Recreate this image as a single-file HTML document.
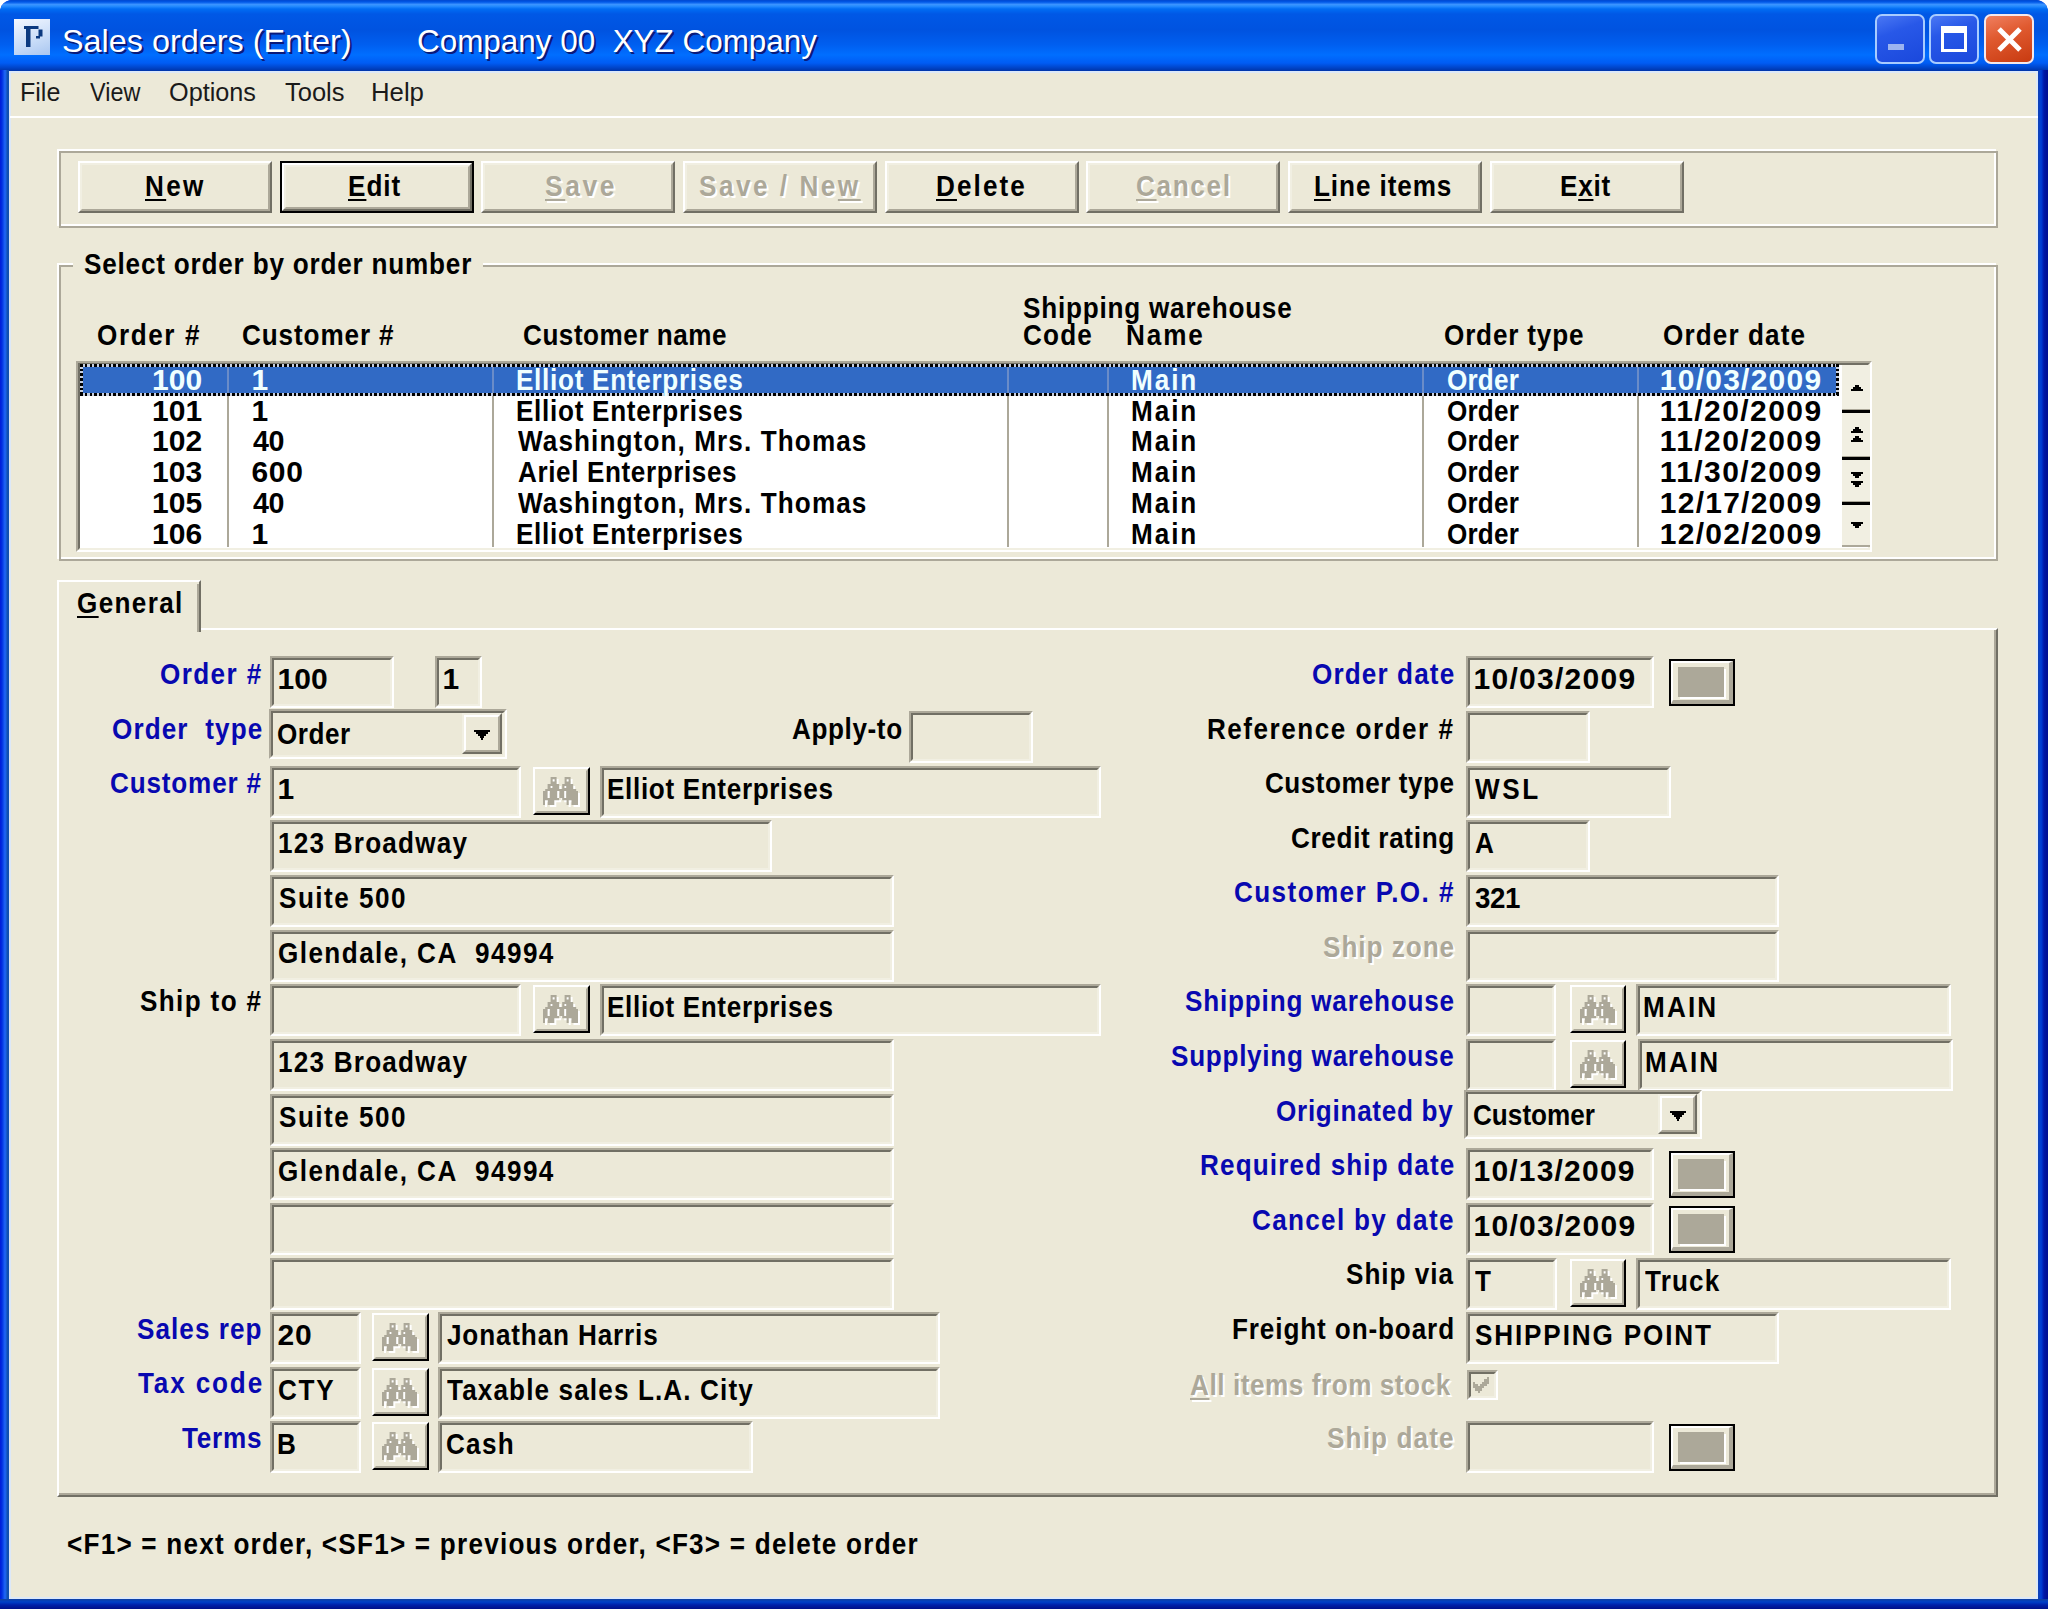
<!DOCTYPE html><html><head><meta charset="utf-8"><style>
*{margin:0;padding:0}
html,body{width:2048px;height:1609px;overflow:hidden;background:#fff;position:relative}
body>div,body>svg{position:absolute}
.t{position:absolute;white-space:nowrap;font-family:"Liberation Sans",sans-serif}
.t u{text-decoration:underline;text-decoration-thickness:2px;text-underline-offset:3px}
.title{left:0;top:0;width:2048px;height:71px;border-radius:12px 12px 0 0;
 background:linear-gradient(180deg,#0048d0 0,#0058e8 2px,#3a93ff 4.5px,#288eff 6px,#006cf4 9px,#0058e6 14px,#0053e0 30px,#005ff0 45px,#006eff 55px,#005cf4 63px,#0048d0 67px,#0034a8 71px);}
.tb{width:50px;height:50px;box-sizing:border-box;border:2.5px solid #a8ccff;border-radius:7px;
 background:linear-gradient(160deg,#4a78f4 0,#2858e8 35%,#1a48dc 100%);}
.tb.close{border-color:#f4e8ec;background:linear-gradient(160deg,#f08060 0,#e05a30 40%,#c83a10 100%);}
.sunk{position:absolute;border-style:solid;border-width:2px;border-color:#aca899 #fff #fff #aca899;}
.sunk::before{content:"";position:absolute;left:0;top:0;right:0;bottom:0;border-style:solid;border-width:2px;border-color:#716f64 #f1efe2 #f1efe2 #716f64;}
.btn,.btn2{position:absolute;background:#ece9d8;border-style:solid;border-width:2px;border-color:#fff #716f64 #716f64 #fff;}
.btn::before,.btn2::before{content:"";position:absolute;left:0;top:0;right:0;bottom:0;border-style:solid;border-width:2px;border-color:#f1efe2 #aca899 #aca899 #f1efe2;}
.btn2{border-color:#f1efe2 #716f64 #716f64 #f1efe2}
.btn2::before{border-color:#fff #aca899 #aca899 #fff}
.btn.blk{border-color:#fff #000 #000 #fff}
.btn.blk::before{border-color:#ece9d8 #aca899 #aca899 #ece9d8}
.etch1{position:absolute;border:2px solid #aca899}
.etch2{position:absolute;border:2px solid #fff}
.panel{position:absolute;border-style:solid;border-width:2px;border-color:#fff #716f64 #716f64 #fff;}
.panel::before{content:"";position:absolute;left:0;top:0;right:0;bottom:0;border-style:solid;border-width:0 2px 2px 0;border-color:#aca899;}
.tab{position:absolute;background:#ece9d8;border-style:solid;border-width:2px 2px 0 2px;border-color:#fff #716f64 #fff #fff;}
.tab::after{content:"";position:absolute;right:0;top:2px;bottom:0;width:2px;background:#aca899}
.cal{position:absolute;border:2px solid #000;background:#ece9d8}
.calin{position:absolute;left:0;top:0;right:0;bottom:0;border-style:solid;border-width:2px 4px 4px 2px;border-color:#fff #aca899 #aca899 #fff;}
.calface{position:absolute;left:7px;top:6px;right:9px;bottom:7px;background:#aca899;box-shadow:2px 2px 0 #fff}
.chk{position:absolute;border-style:solid;border-width:2px;border-color:#aca899 #fff #fff #aca899;background:#ece9d8}
.chk::before{content:"";position:absolute;left:0;top:0;right:0;bottom:0;border-style:solid;border-width:2px;border-color:#716f64 #f1efe2 #f1efe2 #716f64;}
</style></head><body>
<div style="left:0;top:0;width:2048px;height:1609px;background:#0831d9;border-radius:12px 12px 0 0;"></div>
<div class="title"></div>
<div style="left:0px;top:70px;width:9px;height:1539px;background:linear-gradient(90deg,#001ad8 0,#0030e0 2px,#2068f8 5px,#1050b0 7.5px,#1050b0 9px);"></div>
<div style="left:2038px;top:70px;width:10px;height:1539px;background:linear-gradient(90deg,#1040b0 0,#0040d8 3px,#0018a8 6px,#000e90 10px);"></div>
<div style="left:0px;top:1599px;width:2048px;height:10px;background:linear-gradient(180deg,#1040a0 0,#0040c8 3px,#0020a8 6px,#001088 10px);"></div>
<div style="left:9px;top:71px;width:2029px;height:1528px;background:#ece9d8;box-sizing:border-box;border:2px solid #dce8f8;"></div>
<div style="left:14px;top:19px;width:36px;height:36px;background:linear-gradient(160deg,#f4f8ff,#c8dcf8 60%,#a9c6f0);"></div>
<svg style="left:14px;top:19px" width="36" height="36" viewBox="14 19 36 36"><g fill="#0c3a80"><rect x="26" y="26" width="4.5" height="21"/><rect x="24" y="26" width="14.5" height="3"/><rect x="38.5" y="29.5" width="4" height="7"/><rect x="36" y="36" width="4" height="2.5"/></g></svg>
<div class="t" style="left:62.0px;top:24.9px;font-size:32px;line-height:32px;height:32px;color:#fff;font-weight:normal;transform-origin:0 0;transform:scaleX(1.0117);text-shadow:2px 2px 0 #0a1a7a;">Sales orders (Enter)</div>
<div class="t" style="left:417.0px;top:24.9px;font-size:32px;line-height:32px;height:32px;color:#fff;font-weight:normal;transform-origin:0 0;transform:scaleX(0.9820);text-shadow:2px 2px 0 #0a1a7a;">Company 00&nbsp; XYZ Company</div>
<div class="tb" style="left:1875px;top:14px;"><div style="position:absolute;left:11px;top:28px;width:16px;height:6px;background:#9cb4f0"></div></div>
<div class="tb" style="left:1929px;top:14px;"><div style="position:absolute;left:10px;top:10px;width:26px;height:26px;border:3px solid #fff;border-top-width:7px;box-sizing:border-box;"></div></div>
<div class="tb close" style="left:1984px;top:14px;"><svg style="position:absolute;left:9px;top:9px" width="29" height="29" viewBox="0 0 29 29"><path d="M4 4L25 25M25 4L4 25" stroke="#fff" stroke-width="5"/></svg></div>
<div class="t" style="left:20.1px;top:79.2px;font-size:26px;line-height:26px;height:26px;color:#1a1a1a;font-weight:normal;transform-origin:0 0;transform:scaleX(0.9636);">File</div>
<div class="t" style="left:89.5px;top:79.2px;font-size:26px;line-height:26px;height:26px;color:#1a1a1a;font-weight:normal;transform-origin:0 0;transform:scaleX(0.9000);">View</div>
<div class="t" style="left:169.0px;top:79.2px;font-size:26px;line-height:26px;height:26px;color:#1a1a1a;font-weight:normal;transform-origin:0 0;transform:scaleX(0.9706);">Options</div>
<div class="t" style="left:285.0px;top:79.2px;font-size:26px;line-height:26px;height:26px;color:#1a1a1a;font-weight:normal;transform-origin:0 0;transform:scaleX(0.9803);">Tools</div>
<div class="t" style="left:370.5px;top:79.2px;font-size:26px;line-height:26px;height:26px;color:#1a1a1a;font-weight:normal;transform-origin:0 0;transform:scaleX(0.9899);">Help</div>
<div style="left:10px;top:116px;width:2028px;height:2px;background:#fff;"></div>
<div class="etch2" style="left:57px;top:149px;width:1935px;height:73px"></div>
<div class="etch1" style="left:59px;top:151px;width:1935px;height:73px"></div>
<div class="btn" style="left:78px;top:161px;width:190px;height:48px"></div>
<div class="t" style="left:145.0px;top:170.6px;font-size:30px;line-height:30px;height:30px;color:#000;font-weight:bold;transform-origin:0 0;transform:scaleX(0.8700);letter-spacing:2.64px;"><u>N</u>ew</div>
<div style="left:280px;top:161px;width:194px;height:52px;background:#000"></div>
<div class="btn" style="left:282px;top:163px;width:186px;height:44px"></div>
<div class="t" style="left:348.3px;top:170.6px;font-size:30px;line-height:30px;height:30px;color:#000;font-weight:bold;transform-origin:0 0;transform:scaleX(0.8700);letter-spacing:1.13px;"><u>E</u>dit</div>
<div class="btn" style="left:481px;top:161px;width:190px;height:48px"></div>
<div class="t" style="left:546.7px;top:172.6px;font-size:30px;line-height:30px;height:30px;color:#fff;font-weight:bold;transform-origin:0 0;transform:scaleX(0.8791);letter-spacing:3.00px;"><u>S</u>ave</div>
<div class="t" style="left:544.7px;top:170.6px;font-size:30px;line-height:30px;height:30px;color:#aca899;font-weight:bold;transform-origin:0 0;transform:scaleX(0.8791);letter-spacing:3.00px;"><u>S</u>ave</div>
<div class="btn" style="left:683px;top:161px;width:190px;height:48px"></div>
<div class="t" style="left:700.5px;top:172.6px;font-size:30px;line-height:30px;height:30px;color:#fff;font-weight:bold;transform-origin:0 0;transform:scaleX(0.8700);letter-spacing:2.91px;">Save / Ne<u>w</u></div>
<div class="t" style="left:698.5px;top:170.6px;font-size:30px;line-height:30px;height:30px;color:#aca899;font-weight:bold;transform-origin:0 0;transform:scaleX(0.8700);letter-spacing:2.91px;">Save / Ne<u>w</u></div>
<div class="btn" style="left:885px;top:161px;width:190px;height:48px"></div>
<div class="t" style="left:935.6px;top:170.6px;font-size:30px;line-height:30px;height:30px;color:#000;font-weight:bold;transform-origin:0 0;transform:scaleX(0.8700);letter-spacing:2.41px;"><u>D</u>elete</div>
<div class="btn" style="left:1086px;top:161px;width:190px;height:48px"></div>
<div class="t" style="left:1138.1px;top:172.6px;font-size:30px;line-height:30px;height:30px;color:#fff;font-weight:bold;transform-origin:0 0;transform:scaleX(0.8700);letter-spacing:1.94px;"><u>C</u>ancel</div>
<div class="t" style="left:1136.1px;top:170.6px;font-size:30px;line-height:30px;height:30px;color:#aca899;font-weight:bold;transform-origin:0 0;transform:scaleX(0.8700);letter-spacing:1.94px;"><u>C</u>ancel</div>
<div class="btn" style="left:1288px;top:161px;width:190px;height:48px"></div>
<div class="t" style="left:1314.3px;top:170.6px;font-size:30px;line-height:30px;height:30px;color:#000;font-weight:bold;transform-origin:0 0;transform:scaleX(0.8700);letter-spacing:1.05px;"><u>L</u>ine items</div>
<div class="btn" style="left:1490px;top:161px;width:190px;height:48px"></div>
<div class="t" style="left:1559.7px;top:170.6px;font-size:30px;line-height:30px;height:30px;color:#000;font-weight:bold;transform-origin:0 0;transform:scaleX(0.8700);letter-spacing:0.87px;">E<u>x</u>it</div>
<div class="etch2" style="left:57px;top:263px;width:1935px;height:292px"></div>
<div class="etch1" style="left:59px;top:265px;width:1935px;height:292px"></div>
<div style="left:73px;top:256px;width:410px;height:14px;background:#ece9d8;"></div>
<div class="t" style="left:84.4px;top:249.1px;font-size:30px;line-height:30px;height:30px;color:#000;font-weight:bold;transform-origin:0 0;transform:scaleX(0.8700);letter-spacing:0.93px;">Select order by order number</div>
<div class="t" style="left:1023.4px;top:292.6px;font-size:30px;line-height:30px;height:30px;color:#000;font-weight:bold;transform-origin:0 0;transform:scaleX(0.8700);letter-spacing:0.91px;">Shipping warehouse</div>
<div class="t" style="left:97.2px;top:320.1px;font-size:30px;line-height:30px;height:30px;color:#000;font-weight:bold;transform-origin:0 0;transform:scaleX(0.8700);letter-spacing:1.85px;">Order #</div>
<div class="t" style="left:242.1px;top:320.1px;font-size:30px;line-height:30px;height:30px;color:#000;font-weight:bold;transform-origin:0 0;transform:scaleX(0.8700);letter-spacing:1.02px;">Customer #</div>
<div class="t" style="left:522.5px;top:320.1px;font-size:30px;line-height:30px;height:30px;color:#000;font-weight:bold;transform-origin:0 0;transform:scaleX(0.8700);letter-spacing:0.61px;">Customer name</div>
<div class="t" style="left:1022.5px;top:320.1px;font-size:30px;line-height:30px;height:30px;color:#000;font-weight:bold;transform-origin:0 0;transform:scaleX(0.8700);letter-spacing:1.39px;">Code</div>
<div class="t" style="left:1125.8px;top:320.1px;font-size:30px;line-height:30px;height:30px;color:#000;font-weight:bold;transform-origin:0 0;transform:scaleX(0.8700);letter-spacing:2.20px;">Name</div>
<div class="t" style="left:1444.1px;top:320.1px;font-size:30px;line-height:30px;height:30px;color:#000;font-weight:bold;transform-origin:0 0;transform:scaleX(0.8700);letter-spacing:0.95px;">Order type</div>
<div class="t" style="left:1662.8px;top:320.1px;font-size:30px;line-height:30px;height:30px;color:#000;font-weight:bold;transform-origin:0 0;transform:scaleX(0.8700);letter-spacing:1.29px;">Order date</div>
<div class="sunk" style="left:76px;top:361px;width:1792px;height:187px;background:#fff"></div>
<div style="left:80px;top:364px;width:1759px;height:32px;background:#c8d0e0;"></div>
<div style="left:83px;top:367px;width:1753px;height:26px;background:#316ac5;"></div>
<div style="left:80px;top:364px;width:1759px;height:3px;background:repeating-linear-gradient(90deg,#000 0 2.7px,transparent 2.7px 4.75px);"></div>
<div style="left:80px;top:393px;width:1759px;height:3px;background:repeating-linear-gradient(90deg,#000 0 2.7px,transparent 2.7px 4.75px);"></div>
<div style="left:80px;top:364px;width:3px;height:32px;background:repeating-linear-gradient(180deg,#000 0 2.7px,transparent 2.7px 4.75px);"></div>
<div style="left:1836px;top:364px;width:3px;height:32px;background:repeating-linear-gradient(180deg,#000 0 2.7px,transparent 2.7px 4.75px);"></div>
<div style="left:227px;top:396px;width:2px;height:151px;background:#aca899;"></div>
<div style="left:227px;top:367px;width:2px;height:26px;background:#6a8cc8;"></div>
<div style="left:492px;top:396px;width:2px;height:151px;background:#aca899;"></div>
<div style="left:492px;top:367px;width:2px;height:26px;background:#6a8cc8;"></div>
<div style="left:1007px;top:396px;width:2px;height:151px;background:#aca899;"></div>
<div style="left:1007px;top:367px;width:2px;height:26px;background:#6a8cc8;"></div>
<div style="left:1107px;top:396px;width:2px;height:151px;background:#aca899;"></div>
<div style="left:1107px;top:367px;width:2px;height:26px;background:#6a8cc8;"></div>
<div style="left:1422px;top:396px;width:2px;height:151px;background:#aca899;"></div>
<div style="left:1422px;top:367px;width:2px;height:26px;background:#6a8cc8;"></div>
<div style="left:1637px;top:396px;width:2px;height:151px;background:#aca899;"></div>
<div style="left:1637px;top:367px;width:2px;height:26px;background:#6a8cc8;"></div>
<div class="t" style="left:152.0px;top:364.9px;font-size:30px;line-height:30px;height:30px;color:#f0ffff;font-weight:bold;transform-origin:0 0;transform:scaleX(1.0000);letter-spacing:0.12px;">100</div>
<div class="t" style="left:251.5px;top:364.9px;font-size:30px;line-height:30px;height:30px;color:#f0ffff;font-weight:bold;transform-origin:0 0;transform:scaleX(1.0000);letter-spacing:1.10px;">1</div>
<div class="t" style="left:516.3px;top:364.9px;font-size:30px;line-height:30px;height:30px;color:#f0ffff;font-weight:bold;transform-origin:0 0;transform:scaleX(0.8700);letter-spacing:0.82px;">Elliot Enterprises</div>
<div class="t" style="left:1130.7px;top:364.9px;font-size:30px;line-height:30px;height:30px;color:#f0ffff;font-weight:bold;transform-origin:0 0;transform:scaleX(0.8700);letter-spacing:2.24px;">Main</div>
<div class="t" style="left:1446.8px;top:364.9px;font-size:30px;line-height:30px;height:30px;color:#f0ffff;font-weight:bold;transform-origin:0 0;transform:scaleX(0.8700);letter-spacing:0.23px;">Order</div>
<div class="t" style="left:1659.8px;top:364.9px;font-size:30px;line-height:30px;height:30px;color:#f0ffff;font-weight:bold;transform-origin:0 0;transform:scaleX(1.0000);letter-spacing:1.24px;">10/03/2009</div>
<div class="t" style="left:152.0px;top:395.7px;font-size:30px;line-height:30px;height:30px;color:#000;font-weight:bold;transform-origin:0 0;transform:scaleX(1.0000);letter-spacing:0.12px;">101</div>
<div class="t" style="left:251.5px;top:395.7px;font-size:30px;line-height:30px;height:30px;color:#000;font-weight:bold;transform-origin:0 0;transform:scaleX(1.0000);letter-spacing:1.10px;">1</div>
<div class="t" style="left:516.3px;top:395.7px;font-size:30px;line-height:30px;height:30px;color:#000;font-weight:bold;transform-origin:0 0;transform:scaleX(0.8700);letter-spacing:0.82px;">Elliot Enterprises</div>
<div class="t" style="left:1130.7px;top:395.7px;font-size:30px;line-height:30px;height:30px;color:#000;font-weight:bold;transform-origin:0 0;transform:scaleX(0.8700);letter-spacing:2.24px;">Main</div>
<div class="t" style="left:1446.8px;top:395.7px;font-size:30px;line-height:30px;height:30px;color:#000;font-weight:bold;transform-origin:0 0;transform:scaleX(0.8700);letter-spacing:0.23px;">Order</div>
<div class="t" style="left:1659.8px;top:395.7px;font-size:30px;line-height:30px;height:30px;color:#000;font-weight:bold;transform-origin:0 0;transform:scaleX(1.0000);letter-spacing:1.42px;">11/20/2009</div>
<div class="t" style="left:152.0px;top:426.4px;font-size:30px;line-height:30px;height:30px;color:#000;font-weight:bold;transform-origin:0 0;transform:scaleX(1.0000);letter-spacing:0.12px;">102</div>
<div class="t" style="left:252.5px;top:426.4px;font-size:30px;line-height:30px;height:30px;color:#000;font-weight:bold;transform-origin:0 0;transform:scaleX(0.9539);letter-spacing:-0.50px;">40</div>
<div class="t" style="left:518.0px;top:426.4px;font-size:30px;line-height:30px;height:30px;color:#000;font-weight:bold;transform-origin:0 0;transform:scaleX(0.8700);letter-spacing:1.28px;">Washington, Mrs. Thomas</div>
<div class="t" style="left:1130.7px;top:426.4px;font-size:30px;line-height:30px;height:30px;color:#000;font-weight:bold;transform-origin:0 0;transform:scaleX(0.8700);letter-spacing:2.24px;">Main</div>
<div class="t" style="left:1446.8px;top:426.4px;font-size:30px;line-height:30px;height:30px;color:#000;font-weight:bold;transform-origin:0 0;transform:scaleX(0.8700);letter-spacing:0.23px;">Order</div>
<div class="t" style="left:1659.8px;top:426.4px;font-size:30px;line-height:30px;height:30px;color:#000;font-weight:bold;transform-origin:0 0;transform:scaleX(1.0000);letter-spacing:1.42px;">11/20/2009</div>
<div class="t" style="left:152.0px;top:457.2px;font-size:30px;line-height:30px;height:30px;color:#000;font-weight:bold;transform-origin:0 0;transform:scaleX(1.0000);letter-spacing:0.12px;">103</div>
<div class="t" style="left:251.5px;top:457.2px;font-size:30px;line-height:30px;height:30px;color:#000;font-weight:bold;transform-origin:0 0;transform:scaleX(1.0000);letter-spacing:0.67px;">600</div>
<div class="t" style="left:518.0px;top:457.2px;font-size:30px;line-height:30px;height:30px;color:#000;font-weight:bold;transform-origin:0 0;transform:scaleX(0.8700);letter-spacing:0.70px;">Ariel Enterprises</div>
<div class="t" style="left:1130.7px;top:457.2px;font-size:30px;line-height:30px;height:30px;color:#000;font-weight:bold;transform-origin:0 0;transform:scaleX(0.8700);letter-spacing:2.24px;">Main</div>
<div class="t" style="left:1446.8px;top:457.2px;font-size:30px;line-height:30px;height:30px;color:#000;font-weight:bold;transform-origin:0 0;transform:scaleX(0.8700);letter-spacing:0.23px;">Order</div>
<div class="t" style="left:1659.8px;top:457.2px;font-size:30px;line-height:30px;height:30px;color:#000;font-weight:bold;transform-origin:0 0;transform:scaleX(1.0000);letter-spacing:1.42px;">11/30/2009</div>
<div class="t" style="left:152.0px;top:487.9px;font-size:30px;line-height:30px;height:30px;color:#000;font-weight:bold;transform-origin:0 0;transform:scaleX(1.0000);letter-spacing:0.12px;">105</div>
<div class="t" style="left:252.5px;top:487.9px;font-size:30px;line-height:30px;height:30px;color:#000;font-weight:bold;transform-origin:0 0;transform:scaleX(0.9539);letter-spacing:-0.50px;">40</div>
<div class="t" style="left:518.0px;top:487.9px;font-size:30px;line-height:30px;height:30px;color:#000;font-weight:bold;transform-origin:0 0;transform:scaleX(0.8700);letter-spacing:1.28px;">Washington, Mrs. Thomas</div>
<div class="t" style="left:1130.7px;top:487.9px;font-size:30px;line-height:30px;height:30px;color:#000;font-weight:bold;transform-origin:0 0;transform:scaleX(0.8700);letter-spacing:2.24px;">Main</div>
<div class="t" style="left:1446.8px;top:487.9px;font-size:30px;line-height:30px;height:30px;color:#000;font-weight:bold;transform-origin:0 0;transform:scaleX(0.8700);letter-spacing:0.23px;">Order</div>
<div class="t" style="left:1659.8px;top:487.9px;font-size:30px;line-height:30px;height:30px;color:#000;font-weight:bold;transform-origin:0 0;transform:scaleX(1.0000);letter-spacing:1.24px;">12/17/2009</div>
<div class="t" style="left:152.0px;top:518.7px;font-size:30px;line-height:30px;height:30px;color:#000;font-weight:bold;transform-origin:0 0;transform:scaleX(1.0000);letter-spacing:0.12px;">106</div>
<div class="t" style="left:251.5px;top:518.7px;font-size:30px;line-height:30px;height:30px;color:#000;font-weight:bold;transform-origin:0 0;transform:scaleX(1.0000);letter-spacing:1.10px;">1</div>
<div class="t" style="left:516.3px;top:518.7px;font-size:30px;line-height:30px;height:30px;color:#000;font-weight:bold;transform-origin:0 0;transform:scaleX(0.8700);letter-spacing:0.82px;">Elliot Enterprises</div>
<div class="t" style="left:1130.7px;top:518.7px;font-size:30px;line-height:30px;height:30px;color:#000;font-weight:bold;transform-origin:0 0;transform:scaleX(0.8700);letter-spacing:2.24px;">Main</div>
<div class="t" style="left:1446.8px;top:518.7px;font-size:30px;line-height:30px;height:30px;color:#000;font-weight:bold;transform-origin:0 0;transform:scaleX(0.8700);letter-spacing:0.23px;">Order</div>
<div class="t" style="left:1659.8px;top:518.7px;font-size:30px;line-height:30px;height:30px;color:#000;font-weight:bold;transform-origin:0 0;transform:scaleX(1.0000);letter-spacing:1.24px;">12/02/2009</div>
<div style="left:1842px;top:365px;width:28px;height:182px;background:#f1efe2;"></div>
<div style="left:1842px;top:409px;width:28px;height:1px;background:#aca899;"></div>
<div style="left:1842px;top:410px;width:28px;height:3px;background:#000;"></div>
<div style="left:1842px;top:456px;width:28px;height:1px;background:#aca899;"></div>
<div style="left:1842px;top:457px;width:28px;height:3px;background:#000;"></div>
<div style="left:1842px;top:501px;width:28px;height:1px;background:#aca899;"></div>
<div style="left:1842px;top:502px;width:28px;height:3px;background:#000;"></div>
<div style="left:1842px;top:545px;width:28px;height:2px;background:#aca899;"></div>
<svg style="left:1851px;top:385px" width="12" height="6" viewBox="0 0 12 6" shape-rendering="crispEdges"><path d="M4 0h4v2h2v2h2v2h-12v-2h2v-2h2z" fill="#000"/></svg>
<svg style="left:1851px;top:427px" width="12" height="6" viewBox="0 0 12 6" shape-rendering="crispEdges"><path d="M4 0h4v2h2v2h2v2h-12v-2h2v-2h2z" fill="#000"/></svg>
<svg style="left:1851px;top:436px" width="12" height="6" viewBox="0 0 12 6" shape-rendering="crispEdges"><path d="M4 0h4v2h2v2h2v2h-12v-2h2v-2h2z" fill="#000"/></svg>
<svg style="left:1851px;top:472px" width="12" height="6" viewBox="0 0 12 6" shape-rendering="crispEdges"><path d="M0 0h12v2h-2v2h-2v2h-4v-2h-2v-2h-2z" fill="#000"/></svg>
<svg style="left:1851px;top:481px" width="12" height="6" viewBox="0 0 12 6" shape-rendering="crispEdges"><path d="M0 0h12v2h-2v2h-2v2h-4v-2h-2v-2h-2z" fill="#000"/></svg>
<svg style="left:1851px;top:522px" width="12" height="6" viewBox="0 0 12 6" shape-rendering="crispEdges"><path d="M0 0h12v2h-2v2h-2v2h-4v-2h-2v-2h-2z" fill="#000"/></svg>
<div class="panel" style="left:57px;top:628px;width:1937px;height:865px"></div>
<div class="tab" style="left:57px;top:580px;width:140px;height:50px"></div>
<div class="t" style="left:76.5px;top:588.1px;font-size:30px;line-height:30px;height:30px;color:#000;font-weight:bold;transform-origin:0 0;transform:scaleX(0.8700);letter-spacing:1.54px;"><u>G</u>eneral</div>
<div class="t" style="left:159.6px;top:659.2px;font-size:30px;line-height:30px;height:30px;color:#0808b0;font-weight:bold;transform-origin:0 0;transform:scaleX(0.8700);letter-spacing:1.60px;">Order #</div>
<div class="sunk" style="left:270px;top:656px;width:120px;height:48px"></div>
<div class="t" style="left:277.5px;top:663.6px;font-size:30px;line-height:30px;height:30px;color:#000;font-weight:bold;transform-origin:0 0;transform:scaleX(1.0000);letter-spacing:0.07px;">100</div>
<div class="sunk" style="left:435px;top:656px;width:43px;height:48px"></div>
<div class="t" style="left:442.5px;top:663.6px;font-size:30px;line-height:30px;height:30px;color:#000;font-weight:bold;transform-origin:0 0;transform:scaleX(1.0000);letter-spacing:1.10px;">1</div>
<div class="t" style="left:111.5px;top:713.7px;font-size:30px;line-height:30px;height:30px;color:#0808b0;font-weight:bold;transform-origin:0 0;transform:scaleX(0.8700);letter-spacing:1.26px;">Order&nbsp; type</div>
<div class="sunk" style="left:269px;top:709px;width:234px;height:46px"></div>
<div class="btn2" style="left:462px;top:713px;width:36px;height:37px"></div>
<svg style="left:474px;top:730.0px" width="16" height="10" viewBox="0 0 16 10" shape-rendering="crispEdges"><path d="M0 0h16v2h-2v2h-2v2h-2v2h-1v2h-2v-2h-1v-2h-2v-2h-2v-2h-2z" fill="#000"/></svg>
<div class="t" style="left:276.8px;top:718.6px;font-size:30px;line-height:30px;height:30px;color:#000;font-weight:bold;transform-origin:0 0;transform:scaleX(0.8700);letter-spacing:0.58px;">Order</div>
<div class="t" style="left:791.7px;top:713.7px;font-size:30px;line-height:30px;height:30px;color:#000;font-weight:bold;transform-origin:0 0;transform:scaleX(0.8700);letter-spacing:0.70px;">Apply-to</div>
<div class="sunk" style="left:909px;top:711px;width:120px;height:48px"></div>
<div class="t" style="left:109.7px;top:768.3px;font-size:30px;line-height:30px;height:30px;color:#0808b0;font-weight:bold;transform-origin:0 0;transform:scaleX(0.8700);letter-spacing:0.96px;">Customer #</div>
<div class="sunk" style="left:270px;top:766px;width:247px;height:48px"></div>
<div class="t" style="left:277.5px;top:773.6px;font-size:30px;line-height:30px;height:30px;color:#000;font-weight:bold;transform-origin:0 0;transform:scaleX(1.0000);letter-spacing:1.10px;">1</div>
<div class="btn blk" style="left:533px;top:767px;width:53px;height:44px"></div>
<svg style="left:542.5px;top:777.0px" width="37" height="30" viewBox="0 0 37 30"><path transform="translate(2,2)" fill="#fff" fill-rule="evenodd" d="M7.6 0h6v7h-6zM9.6 2.2h2v2.2h-2zM21.6 0h6v7h-6zM23.6 2.2h2v2.2h-2zM4.6 7h11.6v5h-11.6zM7.6 9h1.8v2h-1.8zM19.2 7h11v5h-11zM21.4 9h1.8v2h-1.8zM2.2 12h31v2.1h-31zM0 14h35v9.2h-35zM4.6 14h2.2v7h-2.2zM14.2 14h2.2v7h-2.2zM21.2 14h2v7h-2zM16.2 21h3v2.2h-3zM0 23.2h2v4.8h-2zM4.8 23.2h6.5v4.8h-6.5zM23.6 23.2h2.1v4.8h-2.1zM28.5 23.2h6.5v4.8h-6.5z"/><path fill="#aca899" fill-rule="evenodd" d="M7.6 0h6v7h-6zM9.6 2.2h2v2.2h-2zM21.6 0h6v7h-6zM23.6 2.2h2v2.2h-2zM4.6 7h11.6v5h-11.6zM7.6 9h1.8v2h-1.8zM19.2 7h11v5h-11zM21.4 9h1.8v2h-1.8zM2.2 12h31v2.1h-31zM0 14h35v9.2h-35zM4.6 14h2.2v7h-2.2zM14.2 14h2.2v7h-2.2zM21.2 14h2v7h-2zM16.2 21h3v2.2h-3zM0 23.2h2v4.8h-2zM4.8 23.2h6.5v4.8h-6.5zM23.6 23.2h2.1v4.8h-2.1zM28.5 23.2h6.5v4.8h-6.5z"/></svg>
<div class="sunk" style="left:600px;top:766px;width:497px;height:48px"></div>
<div class="t" style="left:606.8px;top:773.6px;font-size:30px;line-height:30px;height:30px;color:#000;font-weight:bold;transform-origin:0 0;transform:scaleX(0.8700);letter-spacing:0.76px;">Elliot Enterprises</div>
<div class="sunk" style="left:270px;top:820px;width:498px;height:48px"></div>
<div class="t" style="left:277.6px;top:827.6px;font-size:30px;line-height:30px;height:30px;color:#000;font-weight:bold;transform-origin:0 0;transform:scaleX(0.8700);letter-spacing:1.41px;">123 Broadway</div>
<div class="sunk" style="left:270px;top:875px;width:620px;height:48px"></div>
<div class="t" style="left:278.5px;top:882.6px;font-size:30px;line-height:30px;height:30px;color:#000;font-weight:bold;transform-origin:0 0;transform:scaleX(0.8700);letter-spacing:1.72px;">Suite 500</div>
<div class="sunk" style="left:270px;top:930px;width:620px;height:48px"></div>
<div class="t" style="left:277.6px;top:937.6px;font-size:30px;line-height:30px;height:30px;color:#000;font-weight:bold;transform-origin:0 0;transform:scaleX(0.8700);letter-spacing:1.65px;">Glendale, CA&nbsp; 94994</div>
<div class="t" style="left:139.8px;top:986.4px;font-size:30px;line-height:30px;height:30px;color:#000;font-weight:bold;transform-origin:0 0;transform:scaleX(0.8700);letter-spacing:1.56px;">Ship to #</div>
<div class="sunk" style="left:270px;top:984px;width:247px;height:48px"></div>
<div class="btn blk" style="left:533px;top:985px;width:53px;height:44px"></div>
<svg style="left:542.5px;top:995.0px" width="37" height="30" viewBox="0 0 37 30"><path transform="translate(2,2)" fill="#fff" fill-rule="evenodd" d="M7.6 0h6v7h-6zM9.6 2.2h2v2.2h-2zM21.6 0h6v7h-6zM23.6 2.2h2v2.2h-2zM4.6 7h11.6v5h-11.6zM7.6 9h1.8v2h-1.8zM19.2 7h11v5h-11zM21.4 9h1.8v2h-1.8zM2.2 12h31v2.1h-31zM0 14h35v9.2h-35zM4.6 14h2.2v7h-2.2zM14.2 14h2.2v7h-2.2zM21.2 14h2v7h-2zM16.2 21h3v2.2h-3zM0 23.2h2v4.8h-2zM4.8 23.2h6.5v4.8h-6.5zM23.6 23.2h2.1v4.8h-2.1zM28.5 23.2h6.5v4.8h-6.5z"/><path fill="#aca899" fill-rule="evenodd" d="M7.6 0h6v7h-6zM9.6 2.2h2v2.2h-2zM21.6 0h6v7h-6zM23.6 2.2h2v2.2h-2zM4.6 7h11.6v5h-11.6zM7.6 9h1.8v2h-1.8zM19.2 7h11v5h-11zM21.4 9h1.8v2h-1.8zM2.2 12h31v2.1h-31zM0 14h35v9.2h-35zM4.6 14h2.2v7h-2.2zM14.2 14h2.2v7h-2.2zM21.2 14h2v7h-2zM16.2 21h3v2.2h-3zM0 23.2h2v4.8h-2zM4.8 23.2h6.5v4.8h-6.5zM23.6 23.2h2.1v4.8h-2.1zM28.5 23.2h6.5v4.8h-6.5z"/></svg>
<div class="sunk" style="left:600px;top:984px;width:497px;height:48px"></div>
<div class="t" style="left:606.8px;top:991.6px;font-size:30px;line-height:30px;height:30px;color:#000;font-weight:bold;transform-origin:0 0;transform:scaleX(0.8700);letter-spacing:0.76px;">Elliot Enterprises</div>
<div class="sunk" style="left:270px;top:1039px;width:620px;height:48px"></div>
<div class="t" style="left:277.6px;top:1046.6px;font-size:30px;line-height:30px;height:30px;color:#000;font-weight:bold;transform-origin:0 0;transform:scaleX(0.8700);letter-spacing:1.41px;">123 Broadway</div>
<div class="sunk" style="left:270px;top:1094px;width:620px;height:48px"></div>
<div class="t" style="left:278.5px;top:1101.6px;font-size:30px;line-height:30px;height:30px;color:#000;font-weight:bold;transform-origin:0 0;transform:scaleX(0.8700);letter-spacing:1.72px;">Suite 500</div>
<div class="sunk" style="left:270px;top:1148px;width:620px;height:48px"></div>
<div class="t" style="left:277.6px;top:1155.6px;font-size:30px;line-height:30px;height:30px;color:#000;font-weight:bold;transform-origin:0 0;transform:scaleX(0.8700);letter-spacing:1.65px;">Glendale, CA&nbsp; 94994</div>
<div class="sunk" style="left:270px;top:1203px;width:620px;height:48px"></div>
<div class="sunk" style="left:270px;top:1258px;width:620px;height:48px"></div>
<div class="t" style="left:136.9px;top:1313.7px;font-size:30px;line-height:30px;height:30px;color:#0808b0;font-weight:bold;transform-origin:0 0;transform:scaleX(0.8700);letter-spacing:1.21px;">Sales rep</div>
<div class="sunk" style="left:270px;top:1312px;width:87px;height:48px"></div>
<div class="t" style="left:277.5px;top:1319.6px;font-size:30px;line-height:30px;height:30px;color:#000;font-weight:bold;transform-origin:0 0;transform:scaleX(1.0000);letter-spacing:0.82px;">20</div>
<div class="btn blk" style="left:372px;top:1313px;width:53px;height:44px"></div>
<svg style="left:381.5px;top:1323.0px" width="37" height="30" viewBox="0 0 37 30"><path transform="translate(2,2)" fill="#fff" fill-rule="evenodd" d="M7.6 0h6v7h-6zM9.6 2.2h2v2.2h-2zM21.6 0h6v7h-6zM23.6 2.2h2v2.2h-2zM4.6 7h11.6v5h-11.6zM7.6 9h1.8v2h-1.8zM19.2 7h11v5h-11zM21.4 9h1.8v2h-1.8zM2.2 12h31v2.1h-31zM0 14h35v9.2h-35zM4.6 14h2.2v7h-2.2zM14.2 14h2.2v7h-2.2zM21.2 14h2v7h-2zM16.2 21h3v2.2h-3zM0 23.2h2v4.8h-2zM4.8 23.2h6.5v4.8h-6.5zM23.6 23.2h2.1v4.8h-2.1zM28.5 23.2h6.5v4.8h-6.5z"/><path fill="#aca899" fill-rule="evenodd" d="M7.6 0h6v7h-6zM9.6 2.2h2v2.2h-2zM21.6 0h6v7h-6zM23.6 2.2h2v2.2h-2zM4.6 7h11.6v5h-11.6zM7.6 9h1.8v2h-1.8zM19.2 7h11v5h-11zM21.4 9h1.8v2h-1.8zM2.2 12h31v2.1h-31zM0 14h35v9.2h-35zM4.6 14h2.2v7h-2.2zM14.2 14h2.2v7h-2.2zM21.2 14h2v7h-2zM16.2 21h3v2.2h-3zM0 23.2h2v4.8h-2zM4.8 23.2h6.5v4.8h-6.5zM23.6 23.2h2.1v4.8h-2.1zM28.5 23.2h6.5v4.8h-6.5z"/></svg>
<div class="sunk" style="left:438px;top:1312px;width:498px;height:48px"></div>
<div class="t" style="left:446.5px;top:1319.6px;font-size:30px;line-height:30px;height:30px;color:#000;font-weight:bold;transform-origin:0 0;transform:scaleX(0.8700);letter-spacing:0.98px;">Jonathan Harris</div>
<div class="t" style="left:137.5px;top:1368.2px;font-size:30px;line-height:30px;height:30px;color:#0808b0;font-weight:bold;transform-origin:0 0;transform:scaleX(0.8700);letter-spacing:2.13px;">Tax code</div>
<div class="sunk" style="left:270px;top:1367px;width:87px;height:48px"></div>
<div class="t" style="left:277.6px;top:1374.6px;font-size:30px;line-height:30px;height:30px;color:#000;font-weight:bold;transform-origin:0 0;transform:scaleX(0.8700);letter-spacing:1.94px;">CTY</div>
<div class="btn blk" style="left:372px;top:1368px;width:53px;height:44px"></div>
<svg style="left:381.5px;top:1378.0px" width="37" height="30" viewBox="0 0 37 30"><path transform="translate(2,2)" fill="#fff" fill-rule="evenodd" d="M7.6 0h6v7h-6zM9.6 2.2h2v2.2h-2zM21.6 0h6v7h-6zM23.6 2.2h2v2.2h-2zM4.6 7h11.6v5h-11.6zM7.6 9h1.8v2h-1.8zM19.2 7h11v5h-11zM21.4 9h1.8v2h-1.8zM2.2 12h31v2.1h-31zM0 14h35v9.2h-35zM4.6 14h2.2v7h-2.2zM14.2 14h2.2v7h-2.2zM21.2 14h2v7h-2zM16.2 21h3v2.2h-3zM0 23.2h2v4.8h-2zM4.8 23.2h6.5v4.8h-6.5zM23.6 23.2h2.1v4.8h-2.1zM28.5 23.2h6.5v4.8h-6.5z"/><path fill="#aca899" fill-rule="evenodd" d="M7.6 0h6v7h-6zM9.6 2.2h2v2.2h-2zM21.6 0h6v7h-6zM23.6 2.2h2v2.2h-2zM4.6 7h11.6v5h-11.6zM7.6 9h1.8v2h-1.8zM19.2 7h11v5h-11zM21.4 9h1.8v2h-1.8zM2.2 12h31v2.1h-31zM0 14h35v9.2h-35zM4.6 14h2.2v7h-2.2zM14.2 14h2.2v7h-2.2zM21.2 14h2v7h-2zM16.2 21h3v2.2h-3zM0 23.2h2v4.8h-2zM4.8 23.2h6.5v4.8h-6.5zM23.6 23.2h2.1v4.8h-2.1zM28.5 23.2h6.5v4.8h-6.5z"/></svg>
<div class="sunk" style="left:438px;top:1367px;width:498px;height:48px"></div>
<div class="t" style="left:446.5px;top:1374.6px;font-size:30px;line-height:30px;height:30px;color:#000;font-weight:bold;transform-origin:0 0;transform:scaleX(0.8700);letter-spacing:1.30px;">Taxable sales L.A. City</div>
<div class="t" style="left:182.2px;top:1422.8px;font-size:30px;line-height:30px;height:30px;color:#0808b0;font-weight:bold;transform-origin:0 0;transform:scaleX(0.8700);letter-spacing:0.89px;">Terms</div>
<div class="sunk" style="left:270px;top:1421px;width:87px;height:48px"></div>
<div class="t" style="left:276.8px;top:1428.6px;font-size:30px;line-height:30px;height:30px;color:#000;font-weight:bold;transform-origin:0 0;transform:scaleX(0.8700);letter-spacing:1.10px;">B</div>
<div class="btn blk" style="left:372px;top:1422px;width:53px;height:44px"></div>
<svg style="left:381.5px;top:1432.0px" width="37" height="30" viewBox="0 0 37 30"><path transform="translate(2,2)" fill="#fff" fill-rule="evenodd" d="M7.6 0h6v7h-6zM9.6 2.2h2v2.2h-2zM21.6 0h6v7h-6zM23.6 2.2h2v2.2h-2zM4.6 7h11.6v5h-11.6zM7.6 9h1.8v2h-1.8zM19.2 7h11v5h-11zM21.4 9h1.8v2h-1.8zM2.2 12h31v2.1h-31zM0 14h35v9.2h-35zM4.6 14h2.2v7h-2.2zM14.2 14h2.2v7h-2.2zM21.2 14h2v7h-2zM16.2 21h3v2.2h-3zM0 23.2h2v4.8h-2zM4.8 23.2h6.5v4.8h-6.5zM23.6 23.2h2.1v4.8h-2.1zM28.5 23.2h6.5v4.8h-6.5z"/><path fill="#aca899" fill-rule="evenodd" d="M7.6 0h6v7h-6zM9.6 2.2h2v2.2h-2zM21.6 0h6v7h-6zM23.6 2.2h2v2.2h-2zM4.6 7h11.6v5h-11.6zM7.6 9h1.8v2h-1.8zM19.2 7h11v5h-11zM21.4 9h1.8v2h-1.8zM2.2 12h31v2.1h-31zM0 14h35v9.2h-35zM4.6 14h2.2v7h-2.2zM14.2 14h2.2v7h-2.2zM21.2 14h2v7h-2zM16.2 21h3v2.2h-3zM0 23.2h2v4.8h-2zM4.8 23.2h6.5v4.8h-6.5zM23.6 23.2h2.1v4.8h-2.1zM28.5 23.2h6.5v4.8h-6.5z"/></svg>
<div class="sunk" style="left:438px;top:1421px;width:311px;height:48px"></div>
<div class="t" style="left:445.6px;top:1428.6px;font-size:30px;line-height:30px;height:30px;color:#000;font-weight:bold;transform-origin:0 0;transform:scaleX(0.8700);letter-spacing:1.46px;">Cash</div>
<div class="t" style="left:1311.6px;top:659.2px;font-size:30px;line-height:30px;height:30px;color:#0808b0;font-weight:bold;transform-origin:0 0;transform:scaleX(0.8700);letter-spacing:1.30px;">Order date</div>
<div class="sunk" style="left:1466px;top:656px;width:184px;height:48px"></div>
<div class="t" style="left:1473.5px;top:663.6px;font-size:30px;line-height:30px;height:30px;color:#000;font-weight:bold;transform-origin:0 0;transform:scaleX(1.0000);letter-spacing:1.28px;">10/03/2009</div>
<div class="cal" style="left:1669px;top:659px;width:62px;height:43px"><div class="calin"></div><div class="calface"></div></div>
<div class="t" style="left:1207.0px;top:713.7px;font-size:30px;line-height:30px;height:30px;color:#000;font-weight:bold;transform-origin:0 0;transform:scaleX(0.8700);letter-spacing:1.73px;">Reference order #</div>
<div class="sunk" style="left:1466px;top:711px;width:120px;height:48px"></div>
<div class="t" style="left:1264.9px;top:768.3px;font-size:30px;line-height:30px;height:30px;color:#000;font-weight:bold;transform-origin:0 0;transform:scaleX(0.8700);letter-spacing:0.59px;">Customer type</div>
<div class="sunk" style="left:1466px;top:766px;width:201px;height:48px"></div>
<div class="t" style="left:1474.5px;top:773.6px;font-size:30px;line-height:30px;height:30px;color:#000;font-weight:bold;transform-origin:0 0;transform:scaleX(0.8711);letter-spacing:3.00px;">WSL</div>
<div class="t" style="left:1291.1px;top:822.8px;font-size:30px;line-height:30px;height:30px;color:#000;font-weight:bold;transform-origin:0 0;transform:scaleX(0.8700);letter-spacing:0.77px;">Credit rating</div>
<div class="sunk" style="left:1466px;top:820px;width:120px;height:48px"></div>
<div class="t" style="left:1474.5px;top:827.6px;font-size:30px;line-height:30px;height:30px;color:#000;font-weight:bold;transform-origin:0 0;transform:scaleX(0.8700);letter-spacing:1.10px;">A</div>
<div class="t" style="left:1233.5px;top:877.4px;font-size:30px;line-height:30px;height:30px;color:#0808b0;font-weight:bold;transform-origin:0 0;transform:scaleX(0.8700);letter-spacing:1.62px;">Customer P.O. #</div>
<div class="sunk" style="left:1466px;top:875px;width:309px;height:48px"></div>
<div class="t" style="left:1474.5px;top:882.6px;font-size:30px;line-height:30px;height:30px;color:#000;font-weight:bold;transform-origin:0 0;transform:scaleX(0.9241);letter-spacing:-0.50px;">321</div>
<div class="t" style="left:1324.7px;top:933.9px;font-size:30px;line-height:30px;height:30px;color:#fff;font-weight:bold;transform-origin:0 0;transform:scaleX(0.8700);letter-spacing:1.13px;">Ship zone</div>
<div class="t" style="left:1322.7px;top:931.9px;font-size:30px;line-height:30px;height:30px;color:#aca899;font-weight:bold;transform-origin:0 0;transform:scaleX(0.8700);letter-spacing:1.13px;">Ship zone</div>
<div class="sunk" style="left:1466px;top:930px;width:309px;height:48px"></div>
<div class="t" style="left:1184.6px;top:986.4px;font-size:30px;line-height:30px;height:30px;color:#0808b0;font-weight:bold;transform-origin:0 0;transform:scaleX(0.8700);letter-spacing:0.94px;">Shipping warehouse</div>
<div class="sunk" style="left:1466px;top:984px;width:86px;height:48px"></div>
<div class="btn blk" style="left:1570px;top:985px;width:52px;height:44px"></div>
<svg style="left:1579.5px;top:995.0px" width="37" height="30" viewBox="0 0 37 30"><path transform="translate(2,2)" fill="#fff" fill-rule="evenodd" d="M7.6 0h6v7h-6zM9.6 2.2h2v2.2h-2zM21.6 0h6v7h-6zM23.6 2.2h2v2.2h-2zM4.6 7h11.6v5h-11.6zM7.6 9h1.8v2h-1.8zM19.2 7h11v5h-11zM21.4 9h1.8v2h-1.8zM2.2 12h31v2.1h-31zM0 14h35v9.2h-35zM4.6 14h2.2v7h-2.2zM14.2 14h2.2v7h-2.2zM21.2 14h2v7h-2zM16.2 21h3v2.2h-3zM0 23.2h2v4.8h-2zM4.8 23.2h6.5v4.8h-6.5zM23.6 23.2h2.1v4.8h-2.1zM28.5 23.2h6.5v4.8h-6.5z"/><path fill="#aca899" fill-rule="evenodd" d="M7.6 0h6v7h-6zM9.6 2.2h2v2.2h-2zM21.6 0h6v7h-6zM23.6 2.2h2v2.2h-2zM4.6 7h11.6v5h-11.6zM7.6 9h1.8v2h-1.8zM19.2 7h11v5h-11zM21.4 9h1.8v2h-1.8zM2.2 12h31v2.1h-31zM0 14h35v9.2h-35zM4.6 14h2.2v7h-2.2zM14.2 14h2.2v7h-2.2zM21.2 14h2v7h-2zM16.2 21h3v2.2h-3zM0 23.2h2v4.8h-2zM4.8 23.2h6.5v4.8h-6.5zM23.6 23.2h2.1v4.8h-2.1zM28.5 23.2h6.5v4.8h-6.5z"/></svg>
<div class="sunk" style="left:1636px;top:984px;width:311px;height:48px"></div>
<div class="t" style="left:1642.8px;top:991.6px;font-size:30px;line-height:30px;height:30px;color:#000;font-weight:bold;transform-origin:0 0;transform:scaleX(0.8700);letter-spacing:2.49px;">MAIN</div>
<div class="t" style="left:1171.0px;top:1041.0px;font-size:30px;line-height:30px;height:30px;color:#0808b0;font-weight:bold;transform-origin:0 0;transform:scaleX(0.8700);letter-spacing:0.83px;">Supplying warehouse</div>
<div class="sunk" style="left:1466px;top:1039px;width:86px;height:48px"></div>
<div class="btn blk" style="left:1570px;top:1040px;width:52px;height:44px"></div>
<svg style="left:1579.5px;top:1050.0px" width="37" height="30" viewBox="0 0 37 30"><path transform="translate(2,2)" fill="#fff" fill-rule="evenodd" d="M7.6 0h6v7h-6zM9.6 2.2h2v2.2h-2zM21.6 0h6v7h-6zM23.6 2.2h2v2.2h-2zM4.6 7h11.6v5h-11.6zM7.6 9h1.8v2h-1.8zM19.2 7h11v5h-11zM21.4 9h1.8v2h-1.8zM2.2 12h31v2.1h-31zM0 14h35v9.2h-35zM4.6 14h2.2v7h-2.2zM14.2 14h2.2v7h-2.2zM21.2 14h2v7h-2zM16.2 21h3v2.2h-3zM0 23.2h2v4.8h-2zM4.8 23.2h6.5v4.8h-6.5zM23.6 23.2h2.1v4.8h-2.1zM28.5 23.2h6.5v4.8h-6.5z"/><path fill="#aca899" fill-rule="evenodd" d="M7.6 0h6v7h-6zM9.6 2.2h2v2.2h-2zM21.6 0h6v7h-6zM23.6 2.2h2v2.2h-2zM4.6 7h11.6v5h-11.6zM7.6 9h1.8v2h-1.8zM19.2 7h11v5h-11zM21.4 9h1.8v2h-1.8zM2.2 12h31v2.1h-31zM0 14h35v9.2h-35zM4.6 14h2.2v7h-2.2zM14.2 14h2.2v7h-2.2zM21.2 14h2v7h-2zM16.2 21h3v2.2h-3zM0 23.2h2v4.8h-2zM4.8 23.2h6.5v4.8h-6.5zM23.6 23.2h2.1v4.8h-2.1zM28.5 23.2h6.5v4.8h-6.5z"/></svg>
<div class="sunk" style="left:1638px;top:1039px;width:311px;height:48px"></div>
<div class="t" style="left:1644.8px;top:1046.6px;font-size:30px;line-height:30px;height:30px;color:#000;font-weight:bold;transform-origin:0 0;transform:scaleX(0.8700);letter-spacing:2.49px;">MAIN</div>
<div class="t" style="left:1276.1px;top:1095.5px;font-size:30px;line-height:30px;height:30px;color:#0808b0;font-weight:bold;transform-origin:0 0;transform:scaleX(0.8700);letter-spacing:0.82px;">Originated by</div>
<div class="sunk" style="left:1464px;top:1090px;width:234px;height:45px"></div>
<div class="btn2" style="left:1658px;top:1094px;width:35px;height:36px"></div>
<svg style="left:1670px;top:1110.5px" width="16" height="10" viewBox="0 0 16 10" shape-rendering="crispEdges"><path d="M0 0h16v2h-2v2h-2v2h-2v2h-1v2h-2v-2h-1v-2h-2v-2h-2v-2h-2z" fill="#000"/></svg>
<div class="t" style="left:1472.5px;top:1100.0px;font-size:30px;line-height:30px;height:30px;color:#000;font-weight:bold;transform-origin:0 0;transform:scaleX(0.8700);letter-spacing:0.03px;">Customer</div>
<div class="t" style="left:1199.5px;top:1150.1px;font-size:30px;line-height:30px;height:30px;color:#0808b0;font-weight:bold;transform-origin:0 0;transform:scaleX(0.8700);letter-spacing:1.31px;">Required ship date</div>
<div class="sunk" style="left:1466px;top:1148px;width:184px;height:48px"></div>
<div class="t" style="left:1473.5px;top:1155.6px;font-size:30px;line-height:30px;height:30px;color:#000;font-weight:bold;transform-origin:0 0;transform:scaleX(1.0000);letter-spacing:1.20px;">10/13/2009</div>
<div class="cal" style="left:1669px;top:1151px;width:62px;height:43px"><div class="calin"></div><div class="calface"></div></div>
<div class="t" style="left:1252.4px;top:1204.6px;font-size:30px;line-height:30px;height:30px;color:#0808b0;font-weight:bold;transform-origin:0 0;transform:scaleX(0.8700);letter-spacing:1.52px;">Cancel by date</div>
<div class="sunk" style="left:1466px;top:1203px;width:184px;height:48px"></div>
<div class="t" style="left:1473.5px;top:1210.6px;font-size:30px;line-height:30px;height:30px;color:#000;font-weight:bold;transform-origin:0 0;transform:scaleX(1.0000);letter-spacing:1.28px;">10/03/2009</div>
<div class="cal" style="left:1669px;top:1206px;width:62px;height:43px"><div class="calin"></div><div class="calface"></div></div>
<div class="t" style="left:1346.0px;top:1259.1px;font-size:30px;line-height:30px;height:30px;color:#000;font-weight:bold;transform-origin:0 0;transform:scaleX(0.8700);letter-spacing:1.12px;">Ship via</div>
<div class="sunk" style="left:1466px;top:1258px;width:87px;height:48px"></div>
<div class="t" style="left:1474.5px;top:1265.6px;font-size:30px;line-height:30px;height:30px;color:#000;font-weight:bold;transform-origin:0 0;transform:scaleX(0.8700);letter-spacing:1.10px;">T</div>
<div class="btn blk" style="left:1570px;top:1259px;width:52px;height:44px"></div>
<svg style="left:1579.5px;top:1269.0px" width="37" height="30" viewBox="0 0 37 30"><path transform="translate(2,2)" fill="#fff" fill-rule="evenodd" d="M7.6 0h6v7h-6zM9.6 2.2h2v2.2h-2zM21.6 0h6v7h-6zM23.6 2.2h2v2.2h-2zM4.6 7h11.6v5h-11.6zM7.6 9h1.8v2h-1.8zM19.2 7h11v5h-11zM21.4 9h1.8v2h-1.8zM2.2 12h31v2.1h-31zM0 14h35v9.2h-35zM4.6 14h2.2v7h-2.2zM14.2 14h2.2v7h-2.2zM21.2 14h2v7h-2zM16.2 21h3v2.2h-3zM0 23.2h2v4.8h-2zM4.8 23.2h6.5v4.8h-6.5zM23.6 23.2h2.1v4.8h-2.1zM28.5 23.2h6.5v4.8h-6.5z"/><path fill="#aca899" fill-rule="evenodd" d="M7.6 0h6v7h-6zM9.6 2.2h2v2.2h-2zM21.6 0h6v7h-6zM23.6 2.2h2v2.2h-2zM4.6 7h11.6v5h-11.6zM7.6 9h1.8v2h-1.8zM19.2 7h11v5h-11zM21.4 9h1.8v2h-1.8zM2.2 12h31v2.1h-31zM0 14h35v9.2h-35zM4.6 14h2.2v7h-2.2zM14.2 14h2.2v7h-2.2zM21.2 14h2v7h-2zM16.2 21h3v2.2h-3zM0 23.2h2v4.8h-2zM4.8 23.2h6.5v4.8h-6.5zM23.6 23.2h2.1v4.8h-2.1zM28.5 23.2h6.5v4.8h-6.5z"/></svg>
<div class="sunk" style="left:1636px;top:1258px;width:311px;height:48px"></div>
<div class="t" style="left:1644.5px;top:1265.6px;font-size:30px;line-height:30px;height:30px;color:#000;font-weight:bold;transform-origin:0 0;transform:scaleX(0.8700);letter-spacing:1.32px;">Truck</div>
<div class="t" style="left:1232.3px;top:1313.7px;font-size:30px;line-height:30px;height:30px;color:#000;font-weight:bold;transform-origin:0 0;transform:scaleX(0.8700);letter-spacing:1.02px;">Freight on-board</div>
<div class="sunk" style="left:1466px;top:1312px;width:309px;height:48px"></div>
<div class="t" style="left:1474.5px;top:1319.6px;font-size:30px;line-height:30px;height:30px;color:#000;font-weight:bold;transform-origin:0 0;transform:scaleX(0.8700);letter-spacing:2.14px;">SHIPPING POINT</div>
<div class="t" style="left:1192.3px;top:1372.2px;font-size:30px;line-height:30px;height:30px;color:#fff;font-weight:bold;transform-origin:0 0;transform:scaleX(0.8700);letter-spacing:0.65px;"><u>A</u>ll items from stock</div>
<div class="t" style="left:1190.3px;top:1370.2px;font-size:30px;line-height:30px;height:30px;color:#aca899;font-weight:bold;transform-origin:0 0;transform:scaleX(0.8700);letter-spacing:0.65px;"><u>A</u>ll items from stock</div>
<div class="chk" style="left:1467px;top:1370px;width:27px;height:26px"><svg style="position:absolute;left:4px;top:5px" width="16" height="16" viewBox="0 0 7 7" shape-rendering="crispEdges"><path fill="#aca899" d="M6 0h1v3h-1v1h-1v1h-1v1h-1v1h-1v-1h-1v-1h-1v-3h1v1h1v1h1v-1h1v-1h1v-1h1z"/></svg></div>
<div class="t" style="left:1329.2px;top:1424.8px;font-size:30px;line-height:30px;height:30px;color:#fff;font-weight:bold;transform-origin:0 0;transform:scaleX(0.8700);letter-spacing:1.31px;">Ship date</div>
<div class="t" style="left:1327.2px;top:1422.8px;font-size:30px;line-height:30px;height:30px;color:#aca899;font-weight:bold;transform-origin:0 0;transform:scaleX(0.8700);letter-spacing:1.31px;">Ship date</div>
<div class="sunk" style="left:1466px;top:1421px;width:184px;height:48px"></div>
<div class="cal" style="left:1669px;top:1424px;width:62px;height:43px"><div class="calin"></div><div class="calface"></div></div>
<div class="t" style="left:66.7px;top:1529.1px;font-size:30px;line-height:30px;height:30px;color:#000;font-weight:bold;transform-origin:0 0;transform:scaleX(0.8700);letter-spacing:1.42px;">&lt;F1&gt; = next order, &lt;SF1&gt; = previous order, &lt;F3&gt; = delete order</div>
</body></html>
